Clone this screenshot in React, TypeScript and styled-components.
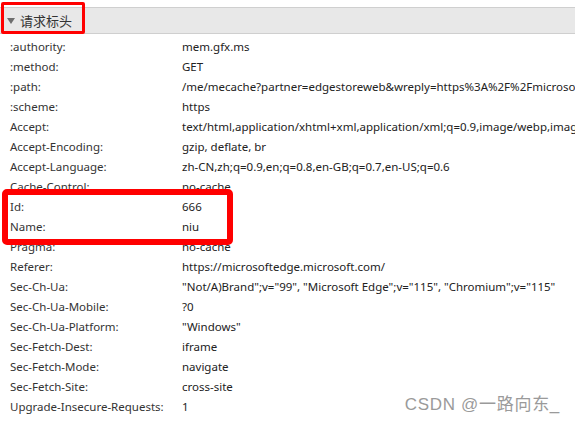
import React from 'react'
import styled, { createGlobalStyle } from 'styled-components'

const GlobalStyle = createGlobalStyle`
  html, body {
    margin: 0;
    padding: 0;
    background: #ffffff;
  }
  body {
    font-family: "Noto Sans", "Noto Sans CJK SC", sans-serif;
    color: #333333;
  }
`

const Page = styled.div`
  position: relative;
  width: 575px;
  height: 421px;
  overflow: hidden;
  padding-top: 7px;
  box-sizing: border-box;
`

const SectionBar = styled.div`
  display: flex;
  align-items: center;
  height: 25px;
  background: #e8e8e8;
  border-top: 1px solid #cfcfcf;
  border-bottom: 1px solid #cfcfcf;
  padding-left: 7px;
  gap: 5px;
`

const Caret = styled.span`
  width: 0;
  height: 0;
  border-left: 4px solid transparent;
  border-right: 4px solid transparent;
  border-top: 6px solid #6e6e6e;
  margin-top: 1px;
`

const SectionTitle = styled.span`
  font-family: "Noto Sans CJK SC", sans-serif;
  font-size: 13px;
  color: #333;
  line-height: 1;
`

// red annotation frame drawn over the content it wraps
const Marked = styled.div<{ $stroke: number; $radius: number; $top: number; $left: number; $w: number; $h: number }>`
  position: relative;
  &::after {
    content: '';
    position: absolute;
    pointer-events: none;
    border: ${p => p.$stroke}px solid #ff0000;
    border-radius: ${p => p.$radius}px;
    top: ${p => p.$top}px;
    left: ${p => p.$left}px;
    width: ${p => p.$w}px;
    height: ${p => p.$h}px;
    box-sizing: border-box;
  }
`

const List = styled.div`
  display: flex;
  flex-direction: column;
  padding-top: 2px;
`

const Row = styled.div`
  display: grid;
  grid-template-columns: 172px 1fr;
  height: 20px;
  align-items: center;
  font-size: 11.5px;
  white-space: nowrap;
  padding-left: 10px;
`

const Key = styled.span`
  color: #333;
`

const Value = styled.span`
  color: #222;
`

const Watermark = styled.div`
  position: absolute;
  right: 15px;
  bottom: 8px;
  line-height: 17px;
  font-family: "Liberation Sans", "Noto Sans CJK SC", sans-serif;
  font-size: 17px;
  letter-spacing: 0.7px;
  color: #9a9a9a;
`

const before: [string, string][] = [
  [':authority:', 'mem.gfx.ms'],
  [':method:', 'GET'],
  [':path:', '/me/mecache?partner=edgestoreweb&wreply=https%3A%2F%2Fmicrosoftedge.microsoft.com'],
  [':scheme:', 'https'],
  ['Accept:', 'text/html,application/xhtml+xml,application/xml;q=0.9,image/webp,image/apng,*/*;q=0.8'],
  ['Accept-Encoding:', 'gzip, deflate, br'],
  ['Accept-Language:', 'zh-CN,zh;q=0.9,en;q=0.8,en-GB;q=0.7,en-US;q=0.6'],
  ['Cache-Control:', 'no-cache'],
]

const custom: [string, string][] = [
  ['Id:', '666'],
  ['Name:', 'niu'],
]

const after: [string, string][] = [
  ['Pragma:', 'no-cache'],
  ['Referer:', 'https://microsoftedge.microsoft.com/'],
  ['Sec-Ch-Ua:', '"Not/A)Brand";v="99", "Microsoft Edge";v="115", "Chromium";v="115"'],
  ['Sec-Ch-Ua-Mobile:', '?0'],
  ['Sec-Ch-Ua-Platform:', '"Windows"'],
  ['Sec-Fetch-Dest:', 'iframe'],
  ['Sec-Fetch-Mode:', 'navigate'],
  ['Sec-Fetch-Site:', 'cross-site'],
  ['Upgrade-Insecure-Requests:', '1'],
]

const renderRows = (rows: [string, string][]) =>
  rows.map(([k, v]) => (
    <Row key={k}>
      <Key>{k}</Key>
      <Value>{v}</Value>
    </Row>
  ))

export default function App() {
  return (
    <>
      <GlobalStyle />
      <Page>
        <Marked $stroke={3} $radius={2} $top={-5} $left={1} $w={84} $h={32}>
          <SectionBar>
            <Caret />
            <SectionTitle>请求标头</SectionTitle>
          </SectionBar>
        </Marked>
        <List>
          {renderRows(before)}
          <Marked $stroke={6} $radius={5} $top={-7} $left={2} $w={231} $h={56}>
            {renderRows(custom)}
          </Marked>
          {renderRows(after)}
        </List>
        <Watermark>CSDN @一路向东_</Watermark>
      </Page>
    </>
  )
}
